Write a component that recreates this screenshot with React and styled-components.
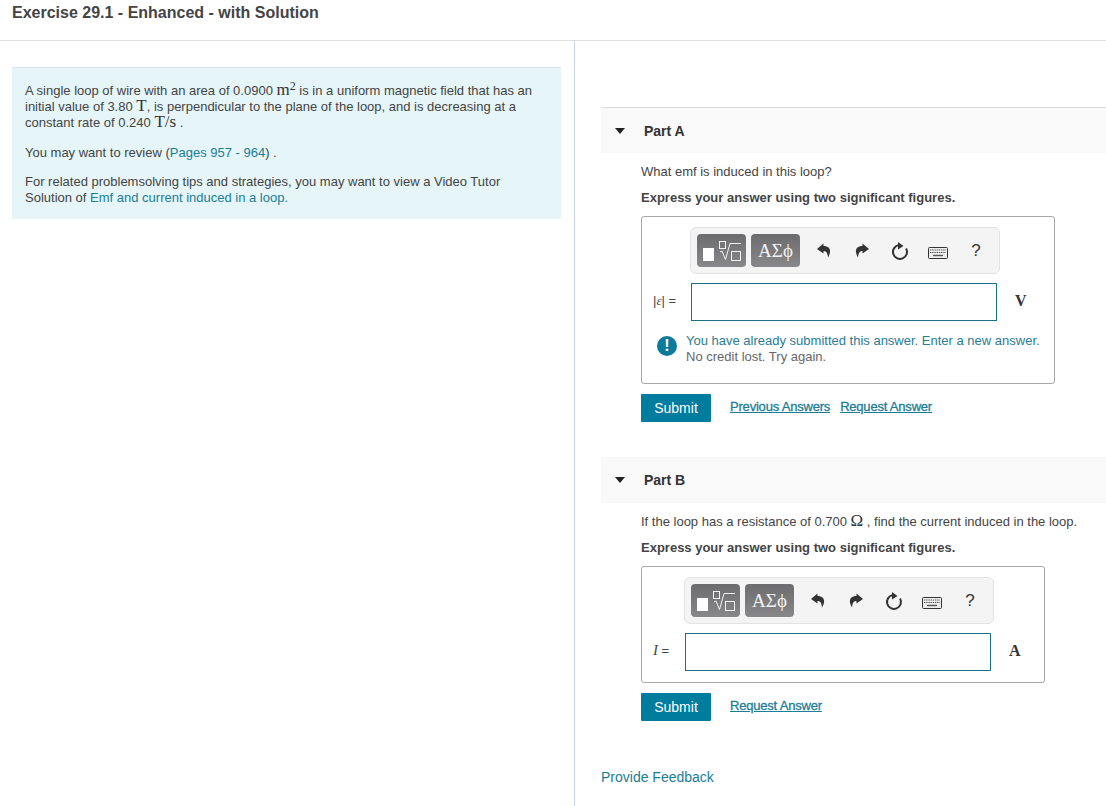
import styled, { createGlobalStyle } from 'styled-components';

const Global = createGlobalStyle`
  html, body { margin: 0; padding: 0; background: #fff; }
  body { font-family: "Liberation Sans", Arial, sans-serif; font-size: 13px; color: #444; }
`;

const Page = styled.div`
  width: 1106px;
  height: 806px;
  overflow: hidden;
`;

const Header = styled.header`
  height: 40px;
  border-bottom: 1px solid #e0e0e0;
  padding-left: 12px;
  font-size: 16px;
  font-weight: bold;
  line-height: 25px;
  color: #444;
`;

const Columns = styled.div`
  display: flex;
  height: 765px;
`;

const Left = styled.aside`
  width: 549px;
  border-right: 1px solid #c5d5e4;
  padding: 26px 13px 0 12px;
`;

const Note = styled.div`
  background: #e5f5f8;
  border-top: 1px solid #d6e8ee;
  height: 151px;
  padding: 0 13px;
  line-height: 16px;
  overflow: hidden;
  p { margin: 0; }
  p:first-child { margin-top: 15px; }
  p:nth-child(2) { margin-top: 14px; }
  p:nth-child(3) { margin-top: 13px; }
`;

const TextLink = styled.a`
  color: #1b7d96;
`;

const Right = styled.main`
  flex: 1;
  padding: 66px 0 0 26px;
`;

const PartBar = styled.div`
  display: flex;
  align-items: center;
  height: 46px;
  box-sizing: border-box;
  background: #f9f9f9;
  border-top: ${p => (p.$ruled ? '1px solid #dedede' : 'none')};
  font-size: 14px;
  font-weight: bold;
  color: #333;
`;

const Caret = styled.span`
  width: 0;
  height: 0;
  margin: 0 19px 0 14px;
  border-left: 5px solid transparent;
  border-right: 5px solid transparent;
  border-top: 6px solid #222;
`;

const PartBody = styled.section`
  padding-left: 40px;
  margin-bottom: ${p => p.$after}px;
`;

const Question = styled.p`
  margin: 11px 0 0;
  line-height: 16px;
`;

const Instruction = styled.p`
  margin: 10px 0;
  line-height: 16px;
  font-weight: bold;
`;

const AnswerBox = styled.div`
  width: ${p => p.$width}px;
  border: 1px solid #a8a8a8;
  border-radius: 3px;
  padding: 10px 0 ${p => p.$bottom}px;
`;

const Toolbar = styled.div`
  display: flex;
  align-items: center;
  width: 310px;
  height: 47px;
  box-sizing: border-box;
  margin-left: ${p => p.$left}px;
  padding-left: 6px;
  background: #f4f4f5;
  border: 1px solid #e2e2e4;
  border-radius: 6px;
`;

const TemplateButton = styled.div`
  display: flex;
  align-items: center;
  justify-content: center;
  width: 49px;
  height: 33px;
  margin-right: 5px;
  background: linear-gradient(#6c6c6f, #88888a);
  border-radius: 4px;
  color: #f2f2f2;
  font-family: "Liberation Serif", serif;
  font-size: 19px;
`;

const ToolIcon = styled.div`
  display: flex;
  align-items: center;
  justify-content: center;
  width: 38px;
  height: 33px;
  padding-top: ${p => p.$drop || 0}px;
  box-sizing: border-box;
  font-size: 17px;
  color: #333;
`;

const InputRow = styled.div`
  display: flex;
  align-items: center;
  margin-top: 9px;
`;

const Label = styled.div`
  width: ${p => p.$width}px;
  margin-top: -3px;
  padding-left: 11px;
  box-sizing: border-box;
  flex: none;
`;

const MathVar = styled.span`
  font-family: "Liberation Serif", serif;
  font-style: italic;
  font-size: ${p => p.$size || 15}px;
`;

const MathUnit = styled.span`
  font-family: "Liberation Serif", serif;
  font-size: 17px;
  line-height: 0;
  color: #333;
`;

const Exponent = styled.sup`
  font-size: 12px;
  line-height: 0;
  vertical-align: 5px;
`;

const AnswerInput = styled.div`
  width: 306px;
  height: 38px;
  box-sizing: border-box;
  border: 1px solid #1b7186;
  background: #fff;
`;

const Unit = styled.div`
  margin: -3px 0 0 18px;
  font-family: "Liberation Serif", serif;
  font-weight: bold;
  font-size: 16px;
  color: #333;
`;

const Message = styled.div`
  display: flex;
  margin: 12px 0 0 15px;
  line-height: 16px;
`;

const AlertIcon = styled.div`
  flex: none;
  width: 20px;
  height: 20px;
  margin: 3px 9px 0 0;
  border-radius: 50%;
  background: #0b7a9b;
  color: #fff;
  font-weight: bold;
  font-size: 16px;
  line-height: 20px;
  text-align: center;
`;

const MessageLead = styled.div`
  color: #2a7c96;
`;

const MessageTail = styled.div`
  color: #666;
`;

const Actions = styled.div`
  display: flex;
  align-items: center;
  margin-top: 10px;
`;

const Submit = styled.div`
  display: flex;
  align-items: center;
  justify-content: center;
  width: 70px;
  height: 28px;
  margin-right: 19px;
  background: #007c9e;
  border-radius: 1px;
  color: #fff;
  font-size: 14px;
`;

const ActionLink = styled.a`
  margin-right: 10px;
  margin-top: -3px;
  color: #1b7d96;
  letter-spacing: -0.2px;
  -webkit-text-stroke: 0.3px #1b7d96;
  text-decoration: underline;
`;

const Feedback = styled.a`
  font-size: 14px;
  color: #1b7d96;
`;

const UndoIcon = ({ flip }) => (
  <svg width="14" height="15" viewBox="0 0 14 15" style={flip ? { transform: 'scaleX(-1)' } : undefined}>
    <path d="M6.5 0.5 L0 6 L6.5 10.5 L6.5 8 C9.5 8 10.5 10 11 14.5 C14.5 9 14 3 6.5 3 Z" fill="#333" />
  </svg>
);

const RefreshIcon = () => (
  <svg width="18" height="19" viewBox="0 0 18 19">
    <path d="M8 3 A7 7 0 1 0 15.1 6.5" fill="none" stroke="#333" strokeWidth="2" />
    <path d="M7 0 L12.5 4 L7 7.5 Z" fill="#333" />
  </svg>
);

const KeyboardIcon = () => (
  <svg width="20" height="12" viewBox="0 0 20 12">
    <rect x="0.5" y="0.5" width="19" height="11" rx="1" fill="#eeeeef" stroke="#333" />
    <path d="M2 3 H18 M2 5.5 H18" stroke="#555" strokeWidth="1.2" strokeDasharray="1.4 0.8" />
    <path d="M5 8.5 H15" stroke="#555" strokeWidth="1.4" />
  </svg>
);

const RootIcon = () => (
  <svg width="38" height="20" viewBox="0 0 38 20">
    <rect x="0" y="7" width="11" height="13" fill="#fff" />
    <g fill="none" stroke="#f2f2f2" strokeWidth="1">
      <rect x="16.5" y="0.5" width="6" height="7" />
      <rect x="28.5" y="10.5" width="9" height="9" />
      <path d="M17 11 L19 10 L22.5 18.5 L27 2.5 H38" />
    </g>
  </svg>
);

function AnswerTools({ left }) {
  return (
    <Toolbar $left={left}>
      <TemplateButton><RootIcon /></TemplateButton>
      <TemplateButton>ΑΣϕ</TemplateButton>
      <ToolIcon><UndoIcon /></ToolIcon>
      <ToolIcon><UndoIcon flip /></ToolIcon>
      <ToolIcon $drop={1}><RefreshIcon /></ToolIcon>
      <ToolIcon $drop={4}><KeyboardIcon /></ToolIcon>
      <ToolIcon>?</ToolIcon>
    </Toolbar>
  );
}

export default function App() {
  return (
    <Page>
      <Global />
      <Header>Exercise 29.1 - Enhanced - with Solution</Header>
      <Columns>
        <Left>
          <Note>
            <p>
              A single loop of wire with an area of 0.0900 <MathUnit>m<Exponent>2</Exponent></MathUnit> is in a uniform magnetic field that has an
              <br />
              initial value of 3.80 <MathUnit>T</MathUnit>, is perpendicular to the plane of the loop, and is decreasing at a
              <br />
              constant rate of 0.240 <MathUnit>T/s</MathUnit> .
            </p>
            <p>You may want to review (<TextLink>Pages 957 - 964</TextLink>) .</p>
            <p>
              For related problemsolving tips and strategies, you may want to view a Video Tutor
              <br />
              Solution of <TextLink>Emf and current induced in a loop.</TextLink>
            </p>
          </Note>
        </Left>
        <Right>
          <PartBar $ruled><Caret />Part A</PartBar>
          <PartBody $after={35}>
            <Question>What emf is induced in this loop?</Question>
            <Instruction>Express your answer using two significant figures.</Instruction>
            <AnswerBox $width={412} $bottom={18}>
              <AnswerTools left={48} />
              <InputRow>
                <Label $width={49}>|<MathVar $size={13}>ε</MathVar>| =</Label>
                <AnswerInput />
                <Unit>V</Unit>
              </InputRow>
              <Message>
                <AlertIcon>!</AlertIcon>
                <div>
                  <MessageLead>You have already submitted this answer. Enter a new answer.</MessageLead>
                  <MessageTail>No credit lost. Try again.</MessageTail>
                </div>
              </Message>
            </AnswerBox>
            <Actions>
              <Submit>Submit</Submit>
              <ActionLink>Previous Answers</ActionLink>
              <ActionLink>Request Answer</ActionLink>
            </Actions>
          </PartBody>
          <PartBar><Caret />Part B</PartBar>
          <PartBody $after={48}>
            <Question>If the loop has a resistance of 0.700 <MathUnit>Ω</MathUnit> , find the current induced in the loop.</Question>
            <Instruction>Express your answer using two significant figures.</Instruction>
            <AnswerBox $width={402} $bottom={11}>
              <AnswerTools left={42} />
              <InputRow>
                <Label $width={43}><MathVar>I</MathVar> =</Label>
                <AnswerInput />
                <Unit>A</Unit>
              </InputRow>
            </AnswerBox>
            <Actions>
              <Submit>Submit</Submit>
              <ActionLink>Request Answer</ActionLink>
            </Actions>
          </PartBody>
          <Feedback>Provide Feedback</Feedback>
        </Right>
      </Columns>
    </Page>
  );
}
